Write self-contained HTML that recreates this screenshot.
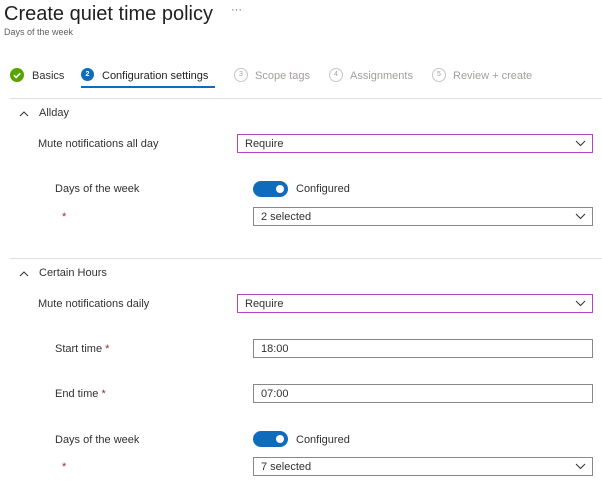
<!DOCTYPE html>
<html><head><style>
body{margin:0;width:602px;height:499px;background:#fff;font-family:"Liberation Sans",sans-serif;color:#323130;position:relative;overflow:hidden}
.a{position:absolute;white-space:nowrap}
.t{font-size:11px}
.box{position:absolute;border:1px solid #8a8886;box-sizing:border-box;background:#fff;font-size:11px;padding-left:7px;line-height:18px}
.p{border-color:#b146c2}
.chev{position:absolute;right:6px;top:5px}
.tog{position:absolute;width:35px;height:16px;border-radius:8px;background:#0f6cbd}
.tog:after{content:"";position:absolute;right:4px;top:4px;width:8px;height:8px;border-radius:50%;background:#fff}
.circ{position:absolute;width:12px;height:12px;border-radius:50%;border:1px solid #c8c6c4;font-size:7px;color:#a19f9d;text-align:center;line-height:12px}
.g{color:#a19f9d;font-size:11px}
.req{color:#a4262c}
</style></head><body>
<div class="a" style="left:4px;top:3px;font-size:20px;color:#201f1e">Create quiet time policy</div>
<div class="a" style="left:231px;top:4px;font-size:11px;color:#605e5c">···</div>
<div class="a" style="left:4px;top:27px;font-size:9px;color:#605e5c">Days of the week</div>

<div class="a" style="left:10px;top:68px;width:14px;height:14px;border-radius:50%;background:#57a300"><svg width="14" height="14"><path d="M3.8 7.2l2.3 2.3 4.2-4.2" stroke="#fff" stroke-width="1.6" fill="none"/></svg></div>
<div class="a t" style="left:32px;top:70px">Basics</div>
<div class="a" style="left:81px;top:68px;width:13px;height:13px;border-radius:50%;background:#0f6cbd;color:#fff;font-size:7px;text-align:center;line-height:13px;font-weight:bold">2</div>
<div class="a t" style="left:102px;top:70px;color:#201f1e">Configuration settings</div>
<div class="a" style="left:81px;top:86px;width:134px;height:2px;background:#0f6cbd"></div>
<div class="circ" style="left:234px;top:68px">3</div><div class="a g" style="left:255px;top:70px">Scope tags</div>
<div class="circ" style="left:329px;top:68px">4</div><div class="a g" style="left:350px;top:70px">Assignments</div>
<div class="circ" style="left:432px;top:68px">5</div><div class="a g" style="left:453px;top:70px">Review + create</div>
<div class="a" style="left:10px;top:98px;width:592px;height:1px;background:#e1dfdd"></div>

<svg class="a" style="left:19px;top:110px" width="10" height="7"><path d="M1 6l4-4 4 4" stroke="#323130" fill="none"/></svg>
<div class="a t" style="left:39px;top:107px">Allday</div>
<div class="a t" style="left:38px;top:138px">Mute notifications all day</div>
<div class="box p" style="left:237px;top:134px;width:356px;height:19px">Require<svg class="chev" width="11" height="7"><path d="M1 1l4.5 4.5L10 1" stroke="#323130" fill="none"/></svg></div>
<div class="a t" style="left:55px;top:183px">Days of the week</div>
<div class="tog" style="left:253px;top:181px"></div>
<div class="a t" style="left:296px;top:183px">Configured</div>
<div class="a t req" style="left:62px;top:211px">*</div>
<div class="box" style="left:253px;top:207px;width:340px;height:19px">2 selected<svg class="chev" width="11" height="7"><path d="M1 1l4.5 4.5L10 1" stroke="#323130" fill="none"/></svg></div>
<div class="a" style="left:10px;top:258px;width:592px;height:1px;background:#e1dfdd"></div>

<svg class="a" style="left:19px;top:270px" width="10" height="7"><path d="M1 6l4-4 4 4" stroke="#323130" fill="none"/></svg>
<div class="a t" style="left:39px;top:267px">Certain Hours</div>
<div class="a t" style="left:38px;top:298px">Mute notifications daily</div>
<div class="box p" style="left:237px;top:294px;width:356px;height:19px">Require<svg class="chev" width="11" height="7"><path d="M1 1l4.5 4.5L10 1" stroke="#323130" fill="none"/></svg></div>
<div class="a t" style="left:55px;top:343px">Start time <span class="req">*</span></div>
<div class="box" style="left:253px;top:339px;width:340px;height:19px">18:00</div>
<div class="a t" style="left:55px;top:388px">End time <span class="req">*</span></div>
<div class="box" style="left:253px;top:384px;width:340px;height:19px">07:00</div>
<div class="a t" style="left:55px;top:434px">Days of the week</div>
<div class="tog" style="left:253px;top:431px"></div>
<div class="a t" style="left:296px;top:434px">Configured</div>
<div class="a t req" style="left:62px;top:461px">*</div>
<div class="box" style="left:253px;top:457px;width:340px;height:19px">7 selected<svg class="chev" width="11" height="7"><path d="M1 1l4.5 4.5L10 1" stroke="#323130" fill="none"/></svg></div>
</body></html>
